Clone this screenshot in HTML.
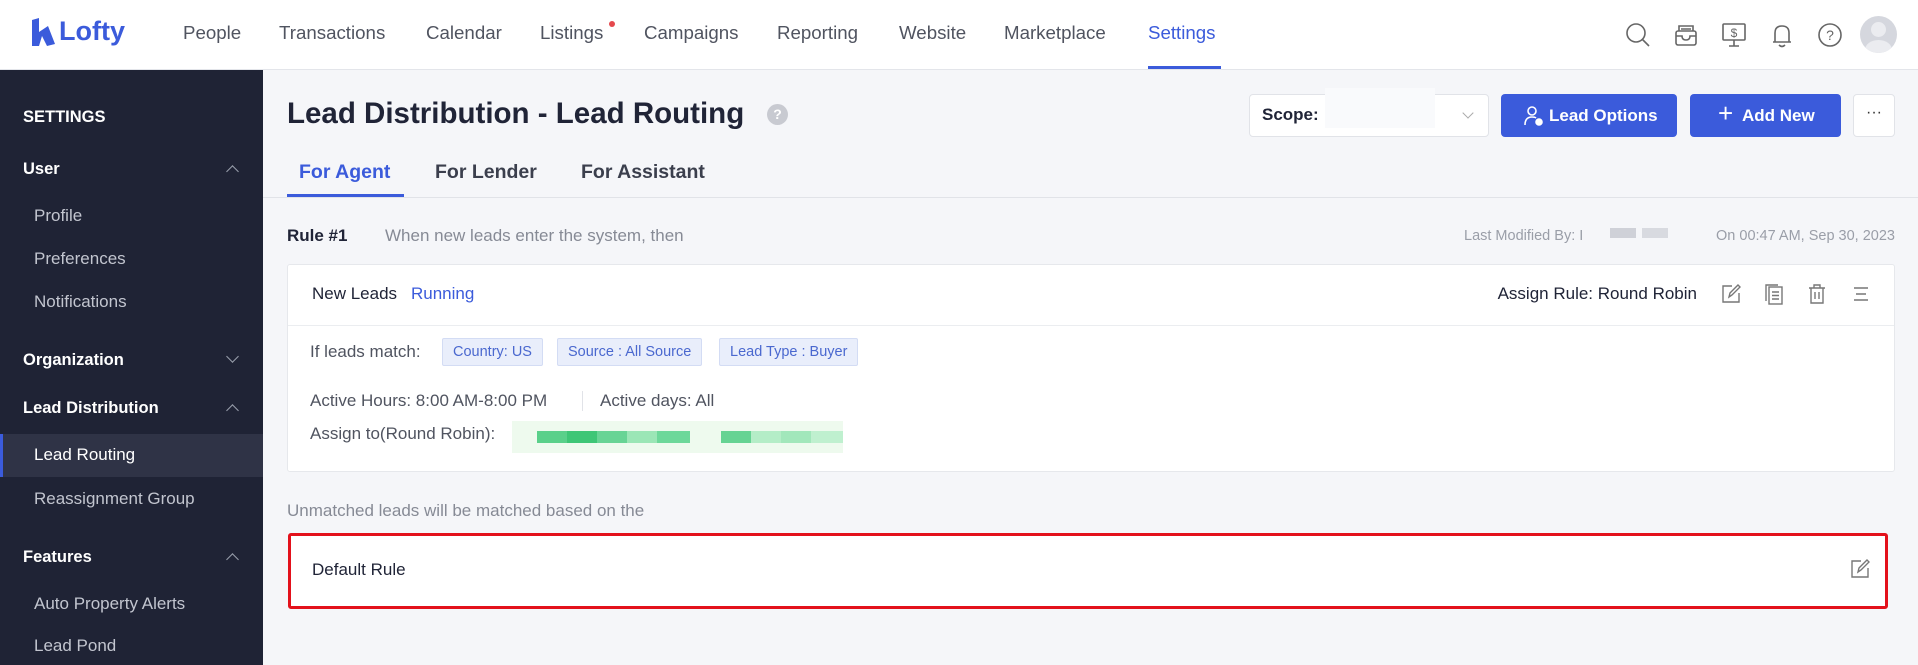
<!DOCTYPE html>
<html><head><meta charset="utf-8"><style>
*{box-sizing:border-box;margin:0;padding:0}
body{width:1918px;height:665px;overflow:hidden;font-family:"Liberation Sans",sans-serif;background:#f5f6f9;position:relative;color:#202437}
.a{position:absolute;white-space:nowrap}
.hdr{position:absolute;left:0;top:0;width:1918px;height:70px;background:#fff;border-bottom:1px solid #e3e5ea}
.nav{font-size:18.7px;color:#505460;top:22px}
.side{position:absolute;left:0;top:70px;width:263px;height:595px;background:#1f2335}
.sh{color:#fff;font-weight:bold;font-size:16.5px;left:23px}
.si{color:#c2c5cf;font-size:17px;left:34px}
.chev{left:228px;width:9px;height:9px;border-left:1.5px solid #9aa0ad;border-top:1.5px solid #9aa0ad}
.up{transform:rotate(45deg)}
.dn{transform:rotate(225deg)}
.tag{top:338px;height:28px;background:#e9eefb;border:1px solid #d3dcf4;color:#4a68cf;font-size:14.5px;line-height:26px;padding:0 10px;border-radius:2px}
.btn{top:94px;height:43px;background:#3b5bdb;border-radius:4px;color:#fff;font-size:17px;font-weight:bold;line-height:43px}
.t{font-size:17px}
svg{position:absolute}
</style></head><body>
<div class="hdr"></div>
<svg style="left:30px;top:18px" width="26" height="30" viewBox="0 0 26 30"><path d="M2 2 L9 0 L9 14 L18 8 L25 26 L17 28 L12 18 L9 28 L2 28 Z" fill="#3b5bdb"/></svg>
<div class="a" style="left:59px;top:16px;font-size:27px;font-weight:bold;color:#3b5bdb">Lofty</div>
<div class="a nav" style="left:183px">People</div>
<div class="a nav" style="left:279px">Transactions</div>
<div class="a nav" style="left:426px">Calendar</div>
<div class="a nav" style="left:540px">Listings</div>
<div class="a" style="left:609px;top:21px;width:6px;height:6px;border-radius:3px;background:#e5484d"></div>
<div class="a nav" style="left:644px">Campaigns</div>
<div class="a nav" style="left:777px">Reporting</div>
<div class="a nav" style="left:899px">Website</div>
<div class="a nav" style="left:1004px">Marketplace</div>
<div class="a nav" style="left:1148px;color:#3b5bdb">Settings</div>
<div class="a" style="left:1148px;top:66px;width:73px;height:3px;background:#3b5bdb"></div>
<svg style="left:1624px;top:21px" width="28" height="28" viewBox="0 0 28 28" fill="none" stroke="#666" stroke-width="1.6"><circle cx="12" cy="12" r="9"/><path d="M18.5 18.5 L25 25"/></svg>
<svg style="left:1672px;top:21px" width="28" height="28" viewBox="0 0 28 28" fill="none" stroke="#666" stroke-width="1.6"><rect x="4" y="10" width="20" height="14" rx="2"/><path d="M7 10 V5 H21 V10 M4 15 H10 Q10 19 14 19 Q18 19 18 15 H24 M9 8 H19"/></svg>
<svg style="left:1720px;top:21px" width="28" height="28" viewBox="0 0 28 28" fill="none" stroke="#666" stroke-width="1.6"><rect x="3" y="3" width="22" height="16" rx="1"/><path d="M14 19 V25 M9 25 H19"/><text x="14" y="16" font-size="12" text-anchor="middle" fill="#666" stroke="none" font-family="Liberation Sans">$</text></svg>
<svg style="left:1768px;top:21px" width="28" height="28" viewBox="0 0 28 28" fill="none" stroke="#666" stroke-width="1.6"><path d="M7 21 V12 Q7 5 14 5 Q21 5 21 12 V21 H5 H23 M11 24 Q14 27 17 24"/></svg>
<svg style="left:1816px;top:21px" width="28" height="28" viewBox="0 0 28 28" fill="none" stroke="#666" stroke-width="1.6"><circle cx="14" cy="14" r="11"/><text x="14" y="19" font-size="14" text-anchor="middle" fill="#666" stroke="none" font-family="Liberation Sans">?</text></svg>
<div class="a" style="left:1860px;top:16px;width:37px;height:37px;border-radius:50%;background:#d5d7de;overflow:hidden"><div style="position:absolute;left:11px;top:6px;width:15px;height:15px;border-radius:50%;background:#ebecf0"></div><div style="position:absolute;left:5px;top:24px;width:27px;height:20px;border-radius:50%;background:#ebecf0"></div></div>

<div class="side"></div>
<div class="a sh" style="top:108px">SETTINGS</div>
<div class="a sh" style="left:23px;top:160px">User</div><div class="a chev up" style="top:167px"></div>
<div class="a si" style="top:206px">Profile</div>
<div class="a si" style="top:249px">Preferences</div>
<div class="a si" style="top:292px">Notifications</div>
<div class="a sh" style="top:351px">Organization</div><div class="a chev dn" style="top:352px"></div>
<div class="a sh" style="top:399px">Lead Distribution</div><div class="a chev up" style="top:406px"></div>
<div class="a" style="left:0;top:434px;width:263px;height:43px;background:#2f3346"></div>
<div class="a" style="left:0;top:434px;width:3px;height:43px;background:#3b5bdb"></div>
<div class="a si" style="top:445px;color:#fff">Lead Routing</div>
<div class="a si" style="top:489px">Reassignment Group</div>
<div class="a sh" style="top:548px">Features</div><div class="a chev up" style="top:555px"></div>
<div class="a si" style="top:594px">Auto Property Alerts</div>
<div class="a si" style="top:636px">Lead Pond</div>

<div class="a" style="left:287px;top:97px;font-size:29.5px;font-weight:bold;color:#202437">Lead Distribution - Lead Routing</div>
<div class="a" style="left:767px;top:104px;width:21px;height:21px;border-radius:50%;background:#c8cad1;color:#fff;font-size:14px;font-weight:bold;text-align:center;line-height:21px">?</div>
<div class="a" style="left:1249px;top:94px;width:240px;height:43px;background:#fff;border:1px solid #e1e3e8;border-radius:4px"></div>
<div class="a" style="left:1262px;top:105px;font-size:17px;font-weight:bold;color:#202437">Scope:</div>
<div class="a" style="left:1325px;top:88px;width:110px;height:40px;background:#f9fafc"></div>
<div class="a" style="left:1464px;top:109px;width:8px;height:8px;border-left:1.3px solid #aaa;border-top:1.3px solid #aaa;transform:rotate(225deg)"></div>
<div class="a btn" style="left:1501px;width:176px"><svg style="left:22px;top:11px" width="22" height="22" viewBox="0 0 22 22" fill="none" stroke="#fff" stroke-width="1.6"><circle cx="9" cy="6" r="4"/><path d="M2 20 Q2 12 9 12 Q12 12 13 13"/><circle cx="16" cy="17" r="3" fill="#fff"/></svg><span style="position:absolute;left:48px">Lead Options</span></div>
<div class="a btn" style="left:1690px;width:151px"><span style="position:absolute;left:28px;font-size:26px;font-weight:normal;top:-2px">+</span><span style="position:absolute;left:52px">Add New</span></div>
<div class="a" style="left:1853px;top:94px;width:42px;height:43px;background:#fff;border:1px solid #e1e3e8;border-radius:4px;text-align:center;font-size:16px;line-height:36px;color:#333">···</div>

<div class="a" style="left:299px;top:161px;font-size:19.5px;font-weight:bold;color:#3b5bdb">For Agent</div>
<div class="a" style="left:435px;top:161px;font-size:19.5px;font-weight:bold;color:#3b3f4d">For Lender</div>
<div class="a" style="left:581px;top:161px;font-size:19.5px;font-weight:bold;color:#3b3f4d">For Assistant</div>
<div class="a" style="left:263px;top:197px;width:1655px;height:1px;background:#e1e3e8"></div>
<div class="a" style="left:287px;top:194px;width:117px;height:3px;background:#3b5bdb"></div>

<div class="a t" style="left:287px;top:226px;font-weight:bold">Rule #1</div>
<div class="a t" style="left:385px;top:226px;color:#868a95">When new leads enter the system, then</div>
<div class="a" style="left:1464px;top:228px;font-size:14.5px;color:#9a9ea8">Last Modified By: I</div>
<div class="a" style="left:1610px;top:228px;width:26px;height:10px;background:#cfd1d8"></div>
<div class="a" style="left:1642px;top:228px;width:26px;height:10px;background:#d8dae0"></div>
<div class="a" style="right:23px;top:228px;font-size:14.5px;color:#9a9ea8">On 00:47 AM, Sep 30, 2023</div>

<div class="a" style="left:287px;top:264px;width:1608px;height:208px;background:#fff;border:1px solid #e6e8ec;border-radius:3px"></div>
<div class="a" style="left:288px;top:325px;width:1606px;height:1px;background:#ebedf0"></div>
<div class="a t" style="left:312px;top:284px;color:#202437">New Leads</div>
<div class="a t" style="left:411px;top:284px;color:#3b5bdb">Running</div>
<div class="a t" style="right:221px;top:284px;color:#202437">Assign Rule: Round Robin</div>
<svg style="left:1720px;top:283px" width="22" height="22" viewBox="0 0 22 22" fill="none" stroke="#777" stroke-width="1.4"><path d="M12 3 H3 V19 H19 V10"/><path d="M9 14 L10 10 L18 2 L20 4 L12 12 Z"/></svg>
<svg style="left:1763px;top:283px" width="22" height="22" viewBox="0 0 22 22" fill="none" stroke="#777" stroke-width="1.4"><rect x="6" y="4" width="13" height="17"/><path d="M3 18 V2 H15 M9 9 H16 M9 12.5 H16 M9 16 H16"/></svg>
<svg style="left:1806px;top:283px" width="22" height="22" viewBox="0 0 22 22" fill="none" stroke="#777" stroke-width="1.4"><path d="M3 5 H19 M8 5 V2 H14 V5 M5 5 V20 H17 V5 M9 9 V16 M13 9 V16"/></svg>
<svg style="left:1850px;top:283px" width="22" height="22" viewBox="0 0 22 22" fill="none" stroke="#777" stroke-width="1.4"><path d="M4 5 H18 M6 11 H16 M4 17 H18"/></svg>

<div class="a t" style="left:310px;top:342px;color:#505460">If leads match:</div>
<div class="a tag" style="left:442px">Country: US</div>
<div class="a tag" style="left:557px">Source : All Source</div>
<div class="a tag" style="left:719px">Lead Type : Buyer</div>
<div class="a t" style="left:310px;top:391px;color:#505460">Active Hours: 8:00 AM-8:00 PM</div>
<div class="a" style="left:582px;top:391px;width:1px;height:20px;background:#e1e3e8"></div>
<div class="a t" style="left:600px;top:391px;color:#505460">Active days: All</div>
<div class="a t" style="left:310px;top:424px;color:#505460">Assign to(Round Robin):</div>
<div class="a" style="left:512px;top:421px;width:331px;height:32px;background:#eefaee"></div>
<div class="a" style="left:537px;top:431px;width:153px;height:12px;background:linear-gradient(90deg,#5ad08a 0,#5ad08a 30px,#3ec676 30px,#3ec676 60px,#68d495 60px,#68d495 90px,#9be6b6 90px,#9be6b6 120px,#6dd89a 120px)"></div>
<div class="a" style="left:721px;top:431px;width:122px;height:12px;background:linear-gradient(90deg,#66d393 0,#66d393 30px,#b4edc7 30px,#b4edc7 60px,#a2e7bb 60px,#a2e7bb 90px,#bff0cf 90px)"></div>

<div class="a t" style="left:287px;top:501px;color:#868a95">Unmatched leads will be matched based on the</div>
<div class="a" style="left:288px;top:533px;width:1600px;height:76px;background:#fff;border:3px solid #e3111b;border-radius:3px"></div>
<div class="a t" style="left:312px;top:560px;color:#202437">Default Rule</div>
<svg style="left:1849px;top:558px" width="22" height="22" viewBox="0 0 22 22" fill="none" stroke="#777" stroke-width="1.4"><path d="M12 3 H3 V19 H19 V10"/><path d="M9 14 L10 10 L18 2 L20 4 L12 12 Z"/></svg>
</body></html>
